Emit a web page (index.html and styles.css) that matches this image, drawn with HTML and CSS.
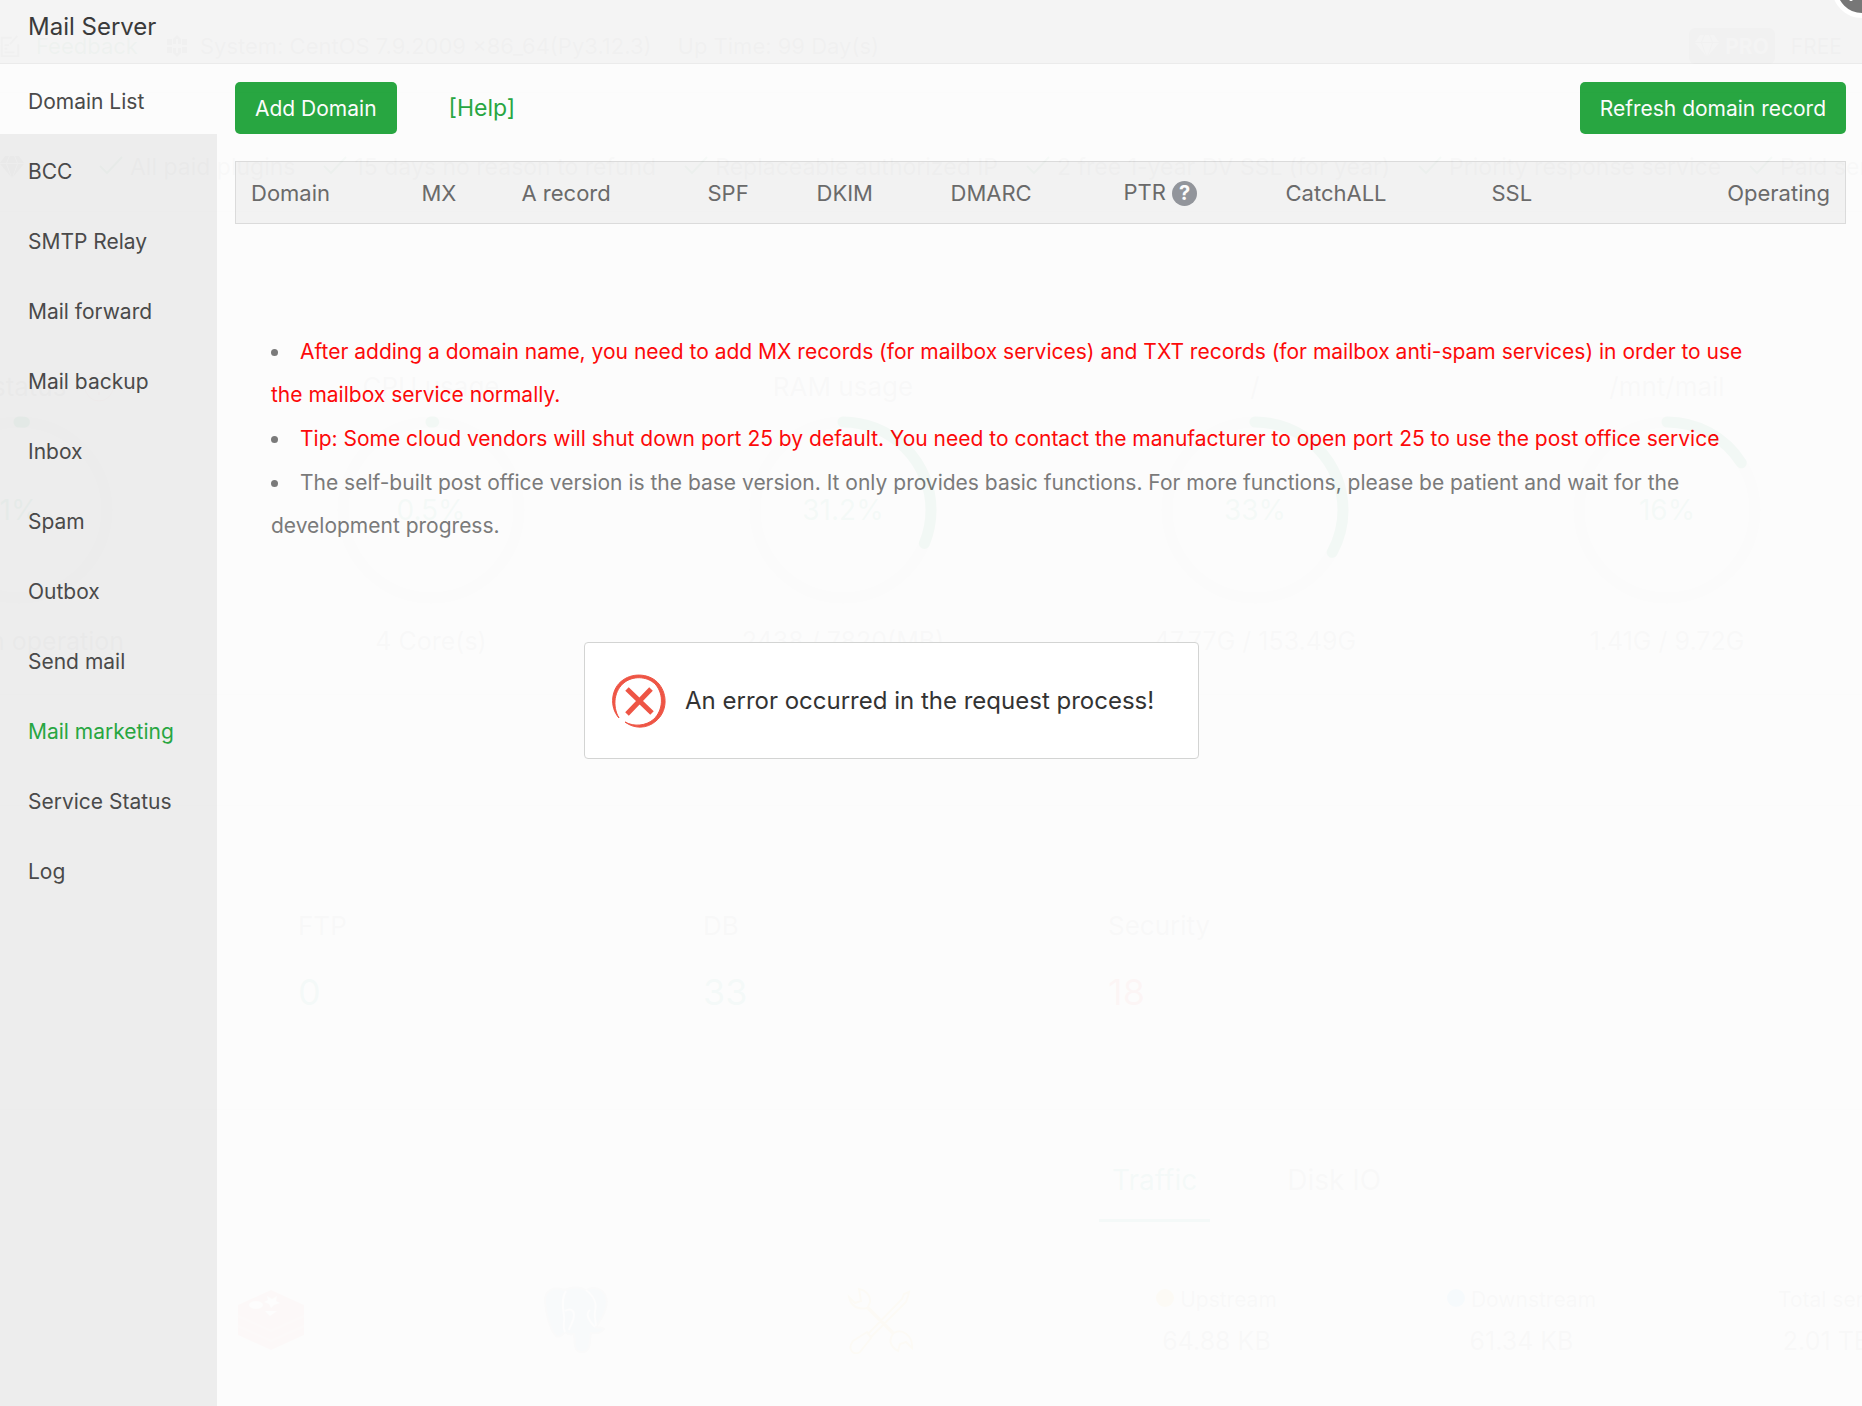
FILE: index.html
```html
<!DOCTYPE html>
<html lang="en">
<head>
    <meta charset="UTF-8">
    <title>Mail Server</title>
    <link rel="stylesheet" href="styles.css">
</head>
<body>
    <!-- shared icons -->
    <svg class="defs" width="0" height="0">
        <symbol id="check" viewBox="0 0 24 20"><path d="M1 11l7 7L23 2" fill="none" stroke="#50906a" stroke-width="2"/></symbol>
        <symbol id="diamond" viewBox="0 0 24 22"><path d="M5 0h4L6 7H0zM10 0h4l3 7H7zM15 0h4l5 7h-6zM0 8h6l5 13zM7 8h10l-5 14zM18 8h6L13 21z" fill="currentColor"/></symbol>
    </svg>

    <div class="dashboard" aria-hidden="true">
        <div class="topbar">
            <svg class="note-icon" viewBox="0 0 20 24"><path d="M12 3H1v20h18V10M4 11h5M4 15h3M4 19h11M10 10l8-9" fill="none" stroke="#777" stroke-width="2"/></svg>
            <span class="green">Feedback</span>
            <svg class="os-icon" viewBox="0 0 22 22"><path d="M11 0l4 4v5h-3V4h-2v5H7V4zM11 22l-4-4v-5h3v5h2v-5h3v5zM1 4h5v6H1zM16 4h5v6h-5zM1 12h5v6H1zM16 12h5v6h-5z" fill="#777"/></svg>
            <span>System: CentOS 7.9.2009 x86_64(Py3.12.3)</span>
            <span class="uptime">Up Time: 99 Day(s)</span>
            <span class="pro"><svg viewBox="0 0 24 22"><use href="#diamond"/></svg>PRO</span>
            <span class="free">FREE</span>
        </div>
        <div class="promo">
            <svg class="promo-diamond" viewBox="0 0 24 22"><use href="#diamond"/></svg>
            <span><svg><use href="#check"/></svg>All paid plugins</span>
            <span><svg><use href="#check"/></svg>15 days no reason to refund</span>
            <span><svg><use href="#check"/></svg>Replaceable authorized IP</span>
            <span><svg><use href="#check"/></svg>2 free 1-year DV SSL (for year)</span>
            <span><svg><use href="#check"/></svg>Priority response service</span>
            <span><svg><use href="#check"/></svg>Paid service</span>
        </div>
        <div class="gauges">
            <div class="gauge">
                <span class="name">Load status<svg class="info" viewBox="0 0 30 30"><circle cx="15" cy="15" r="14" fill="none" stroke="#c08080" stroke-width="1"/><path d="M15 8v9M15 20v3" stroke="#c08080" stroke-width="2"/></svg></span>
                <div class="dial">
                    <svg viewBox="0 0 188 188"><circle cx="94" cy="94" r="88"/><circle class="arc" cx="94" cy="94" r="88" pathLength="100" stroke-dasharray="1 99"/></svg>
                    <b>1%</b>
                </div>
                <span>Smooth operation</span>
            </div>
            <div class="gauge">
                <span class="name">CPU usage</span>
                <div class="dial">
                    <svg viewBox="0 0 188 188"><circle cx="94" cy="94" r="88"/><circle class="arc" cx="94" cy="94" r="88" pathLength="100" stroke-dasharray="0.5 99.5"/></svg>
                    <b>0.5%</b>
                </div>
                <span>4 Core(s)</span>
            </div>
            <div class="gauge">
                <span class="name">RAM usage</span>
                <div class="dial">
                    <svg viewBox="0 0 188 188"><circle cx="94" cy="94" r="88"/><circle class="arc" cx="94" cy="94" r="88" pathLength="100" stroke-dasharray="31.2 68.8"/></svg>
                    <b>31.2%</b>
                </div>
                <span>2438 / 7820(MB)</span>
            </div>
            <div class="gauge">
                <span class="name">/</span>
                <div class="dial">
                    <svg viewBox="0 0 188 188"><circle cx="94" cy="94" r="88"/><circle class="arc" cx="94" cy="94" r="88" pathLength="100" stroke-dasharray="33 67"/></svg>
                    <b>33%</b>
                </div>
                <span>47.77G / 153.49G</span>
            </div>
            <div class="gauge">
                <span class="name">/mnt/mail</span>
                <div class="dial">
                    <svg viewBox="0 0 188 188"><circle cx="94" cy="94" r="88"/><circle class="arc" cx="94" cy="94" r="88" pathLength="100" stroke-dasharray="16 84"/></svg>
                    <b>16%</b>
                </div>
                <span>1.41G / 9.72G</span>
            </div>
        </div>
        <div class="strip"></div>
        <div class="stats">
            <div>FTP<b>0</b></div>
            <div>DB<b>33</b></div>
            <div>Security<b class="red">18</b></div>
        </div>
        <div class="bottom">
            <div class="software">
                <svg viewBox="0 0 68 68"><path d="M34 4l33 15v30L34 64 1 49V19z" fill="#b87e78"/><path d="M1 30l33 15 33-15M1 40l33 15 33-15" fill="none" stroke="#b88a85" stroke-width="2"/><path d="M30 10l5 3 5-3-1 5 4 2-6 2-3 3-2-4-5-2 4-2zM28 25h12l-7 5z" fill="#ccc"/><ellipse cx="19" cy="19" rx="7" ry="4" fill="#ccc"/></svg>
                <svg viewBox="0 0 68 68"><path d="M22 4C11-1 2 6 3 16c1 12 5 28 11 34 4 3 7-2 9-4 2 2 5 3 9 2 1 8-1 18 8 18 10 0 7-11 9-19 6 1 10 0 13-4-2-2-6-1-8-2C61 31 67 19 64 11 61 2 51 0 44 4 37 0 29 1 22 4z" fill="#7898b0" stroke="#999" stroke-width="2"/><path d="M24 5c-5 7-3 18-2 25 1 6-2 10 1 16M23 25c5-3 9-1 9 4 0 7-4 10-5 15M44 4c8 6 11 14 9 21-1 7 1 11 1 15M48 24c-4 3-3 9 5 17" fill="none" stroke="#ccc" stroke-width="2"/></svg>
                <svg viewBox="0 0 68 68"><path d="M12 3c6 1 12 6 11 13l-2 5 26 26c7-5 19 2 18 15l-6-6-6 2-2 7C42 60 42 53 46 48L20 22C12 24 4 21 2 11l6 6 6-2zM62 6l-5 2-2 5-34 35 3 3 35-35 2-6zM20 46L6 55c-6 8 0 15 7 11l11-14z" fill="none" stroke="#c0a040" stroke-width="2"/></svg>
            </div>
            <div class="network">
                <div class="tabs"><span class="on">Traffic</span><span>Disk IO</span></div>
                <div class="flow">
                    <div><span><i class="up"></i>Upstream</span><b>64.88 KB</b></div>
                    <div><span><i class="down"></i>Downstream</span><b>61.34 KB</b></div>
                    <div><span>Total sent</span><b>2.01 TB</b></div>
                </div>
            </div>
        </div>
    </div>

    <div class="dialog" role="dialog" aria-labelledby="title">
        <h1 class="dialog-title" id="title">Mail Server</h1>
        <div class="dialog-body">
            <nav class="menu">
                <a class="active" href="#domain">Domain List</a>
                <a href="#bcc">BCC</a>
                <a href="#relay">SMTP Relay</a>
                <a href="#forward">Mail forward</a>
                <a href="#backup">Mail backup</a>
                <a href="#inbox">Inbox</a>
                <a href="#spam">Spam</a>
                <a href="#outbox">Outbox</a>
                <a href="#send">Send mail</a>
                <a class="hover" href="#marketing">Mail marketing</a>
                <a href="#status">Service Status</a>
                <a href="#log">Log</a>
            </nav>
            <main class="content">
                <div class="toolbar">
                    <button class="btn" type="button">Add Domain</button>
                    <a class="help" href="#help">[Help]</a>
                    <button class="btn refresh" type="button">Refresh domain record</button>
                </div>
                <table class="domains">
                    <colgroup>
                        <col class="c-domain"><col class="c-mx"><col class="c-a"><col class="c-spf"><col class="c-dkim">
                        <col class="c-dmarc"><col class="c-ptr"><col class="c-catch"><col class="c-ssl"><col>
                    </colgroup>
                    <thead>
                        <tr>
                            <th>Domain</th>
                            <th>MX</th>
                            <th>A record</th>
                            <th>SPF</th>
                            <th>DKIM</th>
                            <th>DMARC</th>
                            <th>PTR <span class="tip">?</span></th>
                            <th>CatchALL</th>
                            <th>SSL</th>
                            <th class="right">Operating</th>
                        </tr>
                    </thead>
                </table>
                <ul class="notes">
                    <li class="warn">After adding a domain name, you need to add MX records (for mailbox services) and TXT records (for mailbox anti-spam services) in order to use the mailbox service normally.</li>
                    <li class="warn">Tip: Some cloud vendors will shut down port 25 by default. You need to contact the manufacturer to open port 25 to use the post office service</li>
                    <li>The self-built post office version is the base version. It only provides basic functions. For more functions, please be patient and wait for the development progress.</li>
                </ul>
            </main>
        </div>
    </div>

    <button class="close" type="button" aria-label="Close">
        <svg viewBox="0 0 50 50"><path d="M14 14l22 22M36 14L14 36" stroke="#fff" stroke-width="4" stroke-linecap="round"/></svg>
    </button>

    <div class="message" role="alert">
        <svg viewBox="0 0 54 54">
            <path d="M7 44C-3 33-1 14 11 6 22-2 39 0 47 10c9 11 8 28-3 37-9 8-22 8-31 1 9 5 21 4 29-3 9-9 10-24 2-34C37 3 23 1 13 8 2 16 0 32 7 44z" fill="#ee5545" stroke="#ee5545"/>
            <path d="M15 15l25 24M39 15L15 40" stroke="#ee5545" stroke-width="5"/>
        </svg>
        <span>An error occurred in the request process!</span>
    </div>
</body>
</html>
```
FILE: styles.css
```css
* {
    box-sizing: border-box;
}
body {
    margin: 0;
    height: 100vh;
    overflow: hidden;
    font-family: Inter, "Liberation Sans", sans-serif;
    font-size: 21px;
    color: #444;
}
a {
    text-decoration: none;
}
.defs {
    position: absolute;
}

/* page behind the dialog */
.dashboard {
    height: 100vh;
    overflow: hidden;
    background: #c3c3c3;
    color: #777;
    white-space: nowrap;
}
.dashboard b {
    font-weight: normal;
}
.dashboard .green {
    color: #50906a;
}
.topbar {
    display: flex;
    align-items: center;
    height: 92px;
    padding-right: 20px;
    font-size: 22px;
}
.topbar svg {
    height: 22px;
}
.note-icon {
    width: 20px;
    margin-right: 16px;
}
.os-icon {
    width: 22px;
    margin: 0 12px 0 28px;
}
.uptime {
    margin-left: 26px;
}
.pro {
    display: flex;
    align-items: center;
    gap: 6px;
    height: 36px;
    margin-left: auto;
    padding: 0 6px;
    border-radius: 6px;
    background: #888;
    color: #bbb;
    font-size: 21px;
    font-weight: bold;
}
.pro svg {
    width: 24px;
}
.free {
    margin-left: 16px;
    font-size: 21px;
}
.promo {
    display: flex;
    align-items: center;
    gap: 28px;
    height: 120px;
    padding-top: 30px;
    border-top: 1px solid #b3b3b3;
    border-bottom: 1px solid #b3b3b3;
    font-size: 23px;
}
.promo > * {
    flex-shrink: 0;
}
.promo svg {
    width: 24px;
    height: 20px;
    margin-right: 7px;
}
.promo .promo-diamond {
    height: 24px;
    margin-right: 47px;
}
.gauges {
    display: grid;
    grid-template-columns: repeat(5, 412px);
    margin-left: -187px;
    height: 483px;
    padding-top: 158px;
    border-bottom: 1px solid #b3b3b3;
    font-size: 25px;
}
.gauge {
    display: flex;
    flex-direction: column;
    align-items: center;
    line-height: 34px;
}
.name {
    display: flex;
    align-items: center;
    gap: 18px;
    font-size: 26px;
}
.info {
    width: 30px;
    height: 30px;
}
.dial {
    display: grid;
    place-items: center;
    width: 188px;
    height: 188px;
    margin: 12px 0 20px;
}
.dial svg,
.dial b {
    grid-area: 1 / 1;
}
.dial b {
    color: #308860;
    font-size: 28px;
}
.dial svg {
    width: 188px;
    height: 188px;
    transform: rotate(-90deg);
}
.dial circle {
    fill: none;
    stroke: #a8a8a8;
    stroke-width: 11;
}
.dial .arc {
    stroke: #107a40;
    stroke-linecap: round;
}
.strip {
    height: 111px;
    border-bottom: 1px solid #b3b3b3;
}
.stats {
    display: grid;
    grid-template-columns: repeat(3, 405px);
    height: 304px;
    padding: 103px 0 0 298px;
    border-bottom: 1px solid #b3b3b3;
    font-size: 26px;
    line-height: 34px;
}
.stats b {
    display: block;
    margin-top: 27px;
    color: #308870;
    font-size: 36px;
    line-height: 44px;
}
.stats .red {
    color: #c84848;
}
.bottom {
    display: flex;
}
.software {
    display: grid;
    flex: 0 0 1064px;
    grid-template-columns: repeat(3, 305px);
    justify-items: center;
    padding: 176px 0 0 118px;
}
.software svg {
    width: 68px;
    height: 68px;
}
.network {
    flex: 1;
    min-width: 0;
}
.tabs {
    display: flex;
    gap: 64px;
    height: 112px;
    padding: 53px 0 0 35px;
    font-size: 28px;
}
.tabs span {
    padding: 0 13px;
}
.tabs .on {
    border-bottom: 3px solid #308870;
    color: #308870;
}
.flow {
    display: grid;
    grid-template-columns: repeat(3, 305px);
    margin-top: 65px;
    text-align: center;
}
.flow b {
    display: block;
    margin-top: 14px;
    font-size: 25px;
}
.flow i {
    display: inline-block;
    width: 18px;
    height: 18px;
    margin-right: 6px;
    border-radius: 50%;
}
.flow .up {
    background: #c7a040;
}
.flow .down {
    background: #5898c8;
}

/* dialog */
.dialog {
    position: fixed;
    inset: 0;
    display: flex;
    flex-direction: column;
    background: #fff;
    opacity: .95;
}
.dialog-title {
    height: 64px;
    margin: 0;
    padding: 0 28px;
    border-bottom: 1px solid #eee;
    background: #f7f7f7;
    color: #333;
    font-size: 24px;
    font-weight: normal;
    line-height: 53px;
}
.dialog-body {
    display: flex;
    flex: 1;
}
.menu {
    flex: 0 0 217px;
    background: #f0f0f0;
}
.menu a {
    display: block;
    height: 70px;
    padding-left: 28px;
    color: #444;
    line-height: 75px;
}
.menu .active {
    background: #fff;
}
.menu .hover {
    color: #20a53a;
}
.content {
    flex: 1;
    padding: 18px 16px 0 18px;
}
.toolbar {
    display: flex;
    align-items: center;
    margin-bottom: 27px;
}
.btn {
    height: 52px;
    padding: 0 20px;
    border: none;
    border-radius: 5px;
    background: #20a53a;
    color: #fff;
    font: inherit;
    cursor: pointer;
}
.help {
    margin-left: 52px;
    color: #20a53a;
    font-size: 23px;
}
.refresh {
    margin-left: auto;
}
.domains {
    width: 100%;
    table-layout: fixed;
    border-collapse: collapse;
    border: 1px solid #ddd;
    background: #f5f5f5;
    font-size: 22px;
}
.domains th {
    height: 62px;
    padding: 0 15px;
    color: #666;
    font-weight: normal;
    text-align: left;
    white-space: nowrap;
}
.domains .right {
    text-align: right;
}
.c-domain { width: 171px; }
.c-mx { width: 100px; }
.c-a { width: 186px; }
.c-spf { width: 109px; }
.c-dkim { width: 134px; }
.c-dmarc { width: 173px; }
.c-ptr { width: 162px; }
.c-catch { width: 206px; }
.c-ssl { width: 120px; }
.tip {
    display: inline-block;
    width: 25px;
    height: 25px;
    border-radius: 50%;
    background: #909399;
    color: #fff;
    font-size: 20px;
    font-weight: bold;
    line-height: 25px;
    text-align: center;
}
.notes {
    margin: 106px 0 0;
    padding: 0 80px 0 36px;
    color: #777;
    line-height: 43px;
    list-style-position: inside;
}
.notes li {
    margin-bottom: 1px;
}
.warn {
    color: #f00;
}
.warn::marker {
    color: #777;
}

.close {
    position: fixed;
    top: -42px;
    right: -30px;
    width: 60px;
    height: 60px;
    padding: 0;
    border: 5px solid #fff;
    border-radius: 50%;
    background: #777;
}

/* error popup */
.message {
    position: fixed;
    top: 642px;
    left: 584px;
    display: flex;
    align-items: center;
    gap: 19px;
    height: 117px;
    padding: 0 44px 0 27px;
    border: 1px solid #d3d4d3;
    border-radius: 4px;
    background: #fff;
    color: #333;
    font-size: 24px;
}
.message svg {
    width: 54px;
    height: 54px;
}
```
